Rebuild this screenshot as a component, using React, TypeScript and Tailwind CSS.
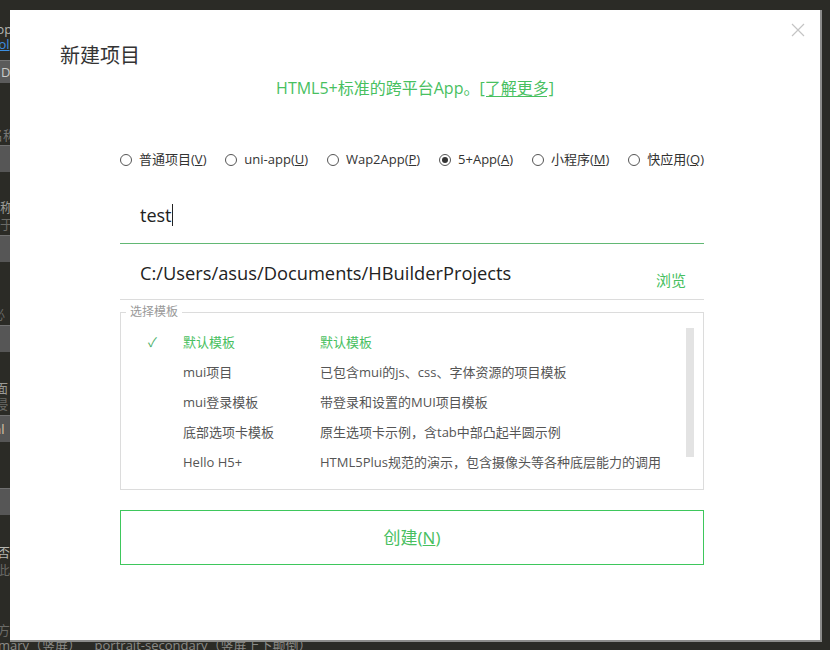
import React from "react";

const font = { fontFamily: '"Open Sans", "Noto Sans CJK SC", sans-serif' };

const kinds = [
  { label: "普通项目", key: "V" },
  { label: "uni-app", key: "U" },
  { label: "Wap2App", key: "P" },
  { label: "5+App", key: "A", checked: true },
  { label: "小程序", key: "M" },
  { label: "快应用", key: "Q" },
];

const templates = [
  { name: "默认模板", desc: "默认模板", active: true },
  { name: "mui项目", desc: "已包含mui的js、css、字体资源的项目模板" },
  { name: "mui登录模板", desc: "带登录和设置的MUI项目模板" },
  { name: "底部选项卡模板", desc: "原生选项卡示例，含tab中部凸起半圆示例" },
  { name: "Hello H5+", desc: "HTML5Plus规范的演示，包含摄像头等各种底层能力的调用" },
];

function Radio({ checked }: { checked?: boolean }) {
  return (
    <span className="w-[12px] h-[12px] rounded-full border border-[#555] flex items-center justify-center shrink-0">
      {checked && <span className="w-[6px] h-[6px] rounded-full bg-[#333]" />}
    </span>
  );
}

// faint editor behind the modal, only the left strip shows
function Backdrop() {
  return (
    <div className="flex flex-col text-[13px] leading-[14px] whitespace-nowrap">
      <div className="mt-[22px] h-[14px] -ml-[12px] text-[#b5b5b0]">App</div>
      <div className="mt-[1px] h-[14px] -ml-[14px] text-[#3d8fe0] underline">tool</div>
      <div className="mt-[9px] h-[23px] w-[120px] bg-[#5b5b5b] border-t border-[#777] text-[#ccc] pl-[1px] leading-[22px]">D</div>
      <div className="mt-[45px] h-[14px] -ml-[10px] text-[#777]">名称</div>
      <div className="mt-[3px] h-[27px] w-[120px] bg-[#565656] border-t border-[#707070]" />
      <div className="mt-[28px] h-[15px] -ml-[13px] text-[#9a9a96]">名称</div>
      <div className="mt-[2px] h-[14px] -ml-[13px] text-[#6a6a66]">高于</div>
      <div className="mt-[4px] h-[27px] w-[120px] bg-[#565656] border-t border-[#707070]" />
      <div className="mt-[45px] h-[14px] -ml-[8px] text-[#6a6a66]">必</div>
      <div className="mt-[4px] h-[27px] w-[120px] bg-[#565656] border-t border-[#707070]" />
      <div className="mt-[29px] h-[14px] -ml-[5px] text-[#9a9a96]">面</div>
      <div className="mt-[2px] h-[14px] -ml-[5px] text-[#6a6a66]">浸</div>
      <div className="mt-[4px] h-[27px] w-[120px] bg-[#565656] border-t border-[#707070] text-[#d8c8a8] leading-[26px] -ml-[6px]">al</div>
      <div className="mt-[46px] h-[27px] w-[120px] bg-[#565656] border-t border-[#707070]" />
      <div className="mt-[30px] h-[14px] -ml-[3px] text-[#b5b5b0]">否</div>
      <div className="mt-[4px] h-[14px] -ml-[3px] text-[#6a6a66]">此</div>
      <div className="mt-[46px] h-[14px] -ml-[3px] text-[#6a6a66]">方向</div>
      <div className="mt-[1px] h-[14px] -ml-[2px] text-[#8a8a86]">
        mary（竖屏）&nbsp;&nbsp;&nbsp;&nbsp;portrait-secondary（竖屏上下颠倒）
      </div>
    </div>
  );
}

export default function App() {
  return (
    <div className="relative w-[830px] h-[650px] bg-[#2b2b26] overflow-hidden" style={font}>
      <Backdrop />

      <div className="absolute left-[10px] top-[10px] w-[810px] h-[630px] bg-white border-r-2 border-b-2 border-[#8c8c8a] box-content">
        <button className="absolute right-[15px] top-[13px] w-[14px] h-[14px]">
          <svg viewBox="0 0 14 14" width="14" height="14">
            <path d="M1 1L13 13M13 1L1 13" stroke="#c4c4c4" strokeWidth="1.2" />
          </svg>
        </button>

        <div className="flex flex-col">
          <h1 className="mt-[32px] ml-[50px] h-[28px] text-[20px] leading-[28px] text-[#333]">新建项目</h1>

          <p className="mt-[6px] h-[24px] text-center text-[16px] leading-[24px] text-[#48c05f]">
            HTML5+标准的跨平台App。<span className="underline underline-offset-2">[了解更多]</span>
          </p>

          <div className="ml-[110px] w-[584px] flex flex-col">
            <div className="mt-[50px] h-[20px] flex items-center justify-between text-[13px] text-[#333]">
              {kinds.map((k) => (
                <label key={k.key} className="flex items-center gap-[7px]">
                  <Radio checked={k.checked} />
                  <span>
                    {k.label}(<span className="underline">{k.key}</span>)
                  </span>
                </label>
              ))}
            </div>

            <div className="h-[74px] border-b border-[#62b874] pt-[33px] pl-[20px] flex items-start">
              <div className="h-[24px] flex items-center text-[18px] leading-[24px] text-[#222]">
                <span>test</span>
                <span className="w-[1px] h-[22px] bg-[#222]" />
              </div>
            </div>

            <div className="h-[56px] border-b border-[#dcdcdc] pl-[20px] pr-[18px] flex justify-between items-start">
              <span className="mt-[17px] h-[24px] text-[18.3px] leading-[24px] text-[#222]">C:/Users/asus/Documents/HBuilderProjects</span>
              <span className="mt-[26px] h-[20px] text-[15px] leading-[20px] text-[#48c05f]">浏览</span>
            </div>

            <div className="relative mt-[12px] h-[178px] border border-[#dcdcdc] pt-[15px]">
              <span className="absolute -top-[9px] left-[5px] px-[4px] bg-white text-[12px] leading-[16px] text-[#999]">选择模板</span>
              <div className="absolute top-[15px] right-[9px] w-[8px] h-[129px] bg-[#e3e3e3]" />
              {templates.map((t) => (
                <div
                  key={t.name}
                  className={`h-[30px] flex items-center text-[13px] ${t.active ? "text-[#48c05f]" : "text-[#555]"}`}
                >
                  <span className="w-[62px] pl-[27px] text-[#4caf6a]">{t.active ? "✓" : ""}</span>
                  <span className="w-[137px]">{t.name}</span>
                  <span>{t.desc}</span>
                </div>
              ))}
            </div>

            <button className="mt-[20px] h-[55px] border border-[#3ec75c] text-[17px] text-[#48c05f]">
              创建(<span className="underline">N</span>)
            </button>
          </div>
        </div>
      </div>
    </div>
  );
}
